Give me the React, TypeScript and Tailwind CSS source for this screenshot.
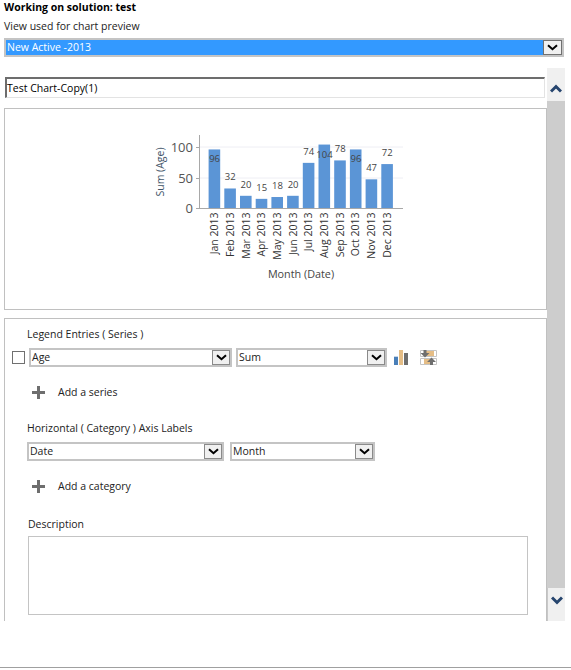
const bars = [
  { m: 'Jan 2013', v: 96 },
  { m: 'Feb 2013', v: 32 },
  { m: 'Mar 2013', v: 20 },
  { m: 'Apr 2013', v: 15 },
  { m: 'May 2013', v: 18 },
  { m: 'Jun 2013', v: 20 },
  { m: 'Jul 2013', v: 74 },
  { m: 'Aug 2013', v: 104 },
  { m: 'Sep 2013', v: 78 },
  { m: 'Oct 2013', v: 96 },
  { m: 'Nov 2013', v: 47 },
  { m: 'Dec 2013', v: 72 },
]

function Chevron({ color = '#000000' }: { color?: string }) {
  return (
    <svg width="11" height="7" viewBox="0 0 11 7">
      <path d="M1 1.2 L5.5 5.2 L10 1.2" fill="none" stroke={color} strokeWidth="2" />
    </svg>
  )
}

function ScrollChevron() {
  return (
    <svg width="12" height="9" viewBox="0 0 12 9">
      <path d="M1 1.5 L6 6.5 L11 1.5" fill="none" stroke="#26456e" strokeWidth="3" />
    </svg>
  )
}

function Select({ label, className }: { label: string; className: string }) {
  return (
    <div className={`flex h-[19px] items-center border-2 border-[#c4c4c4] bg-white ${className}`}>
      <span className="flex-1 pl-[1px] leading-[15px]">{label}</span>
      <span className="flex h-[15px] w-[18px] shrink-0 items-center justify-center border border-[#8a8a8a] bg-[#f0f0f0]">
        <Chevron />
      </span>
    </div>
  )
}

function AddRow({ label, className }: { label: string; className: string }) {
  return (
    <div className={`flex items-center ${className}`}>
      <svg width="13" height="13" viewBox="0 0 13 13" className="ml-[5px]">
        <path d="M5 0h3v5h5v3H8v5H5V8H0V5h5z" fill="#6e6e6e" />
      </svg>
      <span className="ml-[13px]">{label}</span>
    </div>
  )
}

function Chart() {
  const base = 208
  const scale = 0.61
  return (
    <svg width="541" height="200" viewBox="5 109 541 200" className="block">
      <line x1="199" y1="147" x2="403" y2="147" stroke="#eeeef4" />
      <line x1="199" y1="178" x2="403" y2="178" stroke="#eeeef4" />
      {bars.map((b, i) => {
        const x = 208.6 + i * 15.7
        const h = b.v * scale
        const inside = b.v === 96 || b.v === 104
        return (
          <g key={b.m}>
            <rect x={x} y={base - h} width="11.6" height={h} fill="#5b95d6" />
            <text
              x={x + 6}
              y={inside ? base - h + 13 : base - h - 8}
              textAnchor="middle"
              fontSize="9.5"
              fill="#444444"
            >
              {b.v}
            </text>
            <text
              transform={`translate(${x + 9.5} 212.5) rotate(-90)`}
              textAnchor="end"
              fontSize="10.5"
              fill="#333333"
            >
              {b.m}
            </text>
          </g>
        )
      })}
      <path d="M199.5 135V208.5H403M196 147.5h4M196 178.5h4M196 208.5h4" fill="none" stroke="#a8a8a8" />
      <text x="193" y="151.5" textAnchor="end" fontSize="13" fill="#555555">100</text>
      <text x="193" y="182.5" textAnchor="end" fontSize="13" fill="#555555">50</text>
      <text x="193" y="213" textAnchor="end" fontSize="13" fill="#555555">0</text>
      <text transform="translate(164 172) rotate(-90)" textAnchor="middle" fontSize="10.5" fill="#3f5468">Sum (Age)</text>
      <text x="301" y="278" textAnchor="middle" fontSize="10.8" fill="#444444">Month (Date)</text>
    </svg>
  )
}

export default function App() {
  return (
    <div className="relative flex h-[670px] w-[571px] flex-col overflow-hidden bg-white font-['Open_Sans',sans-serif] text-[10.5px] text-[#222222]">
      <div className="pl-[4px] font-bold leading-[15px] text-black -mb-[3px]">Working on solution: test</div>
      <div className="mt-[7px] pl-[4px] leading-[15px]">View used for chart preview</div>

      <div className="ml-[4px] mt-[4px] flex h-[19px] w-[560px] items-center border-2 border-[#c4c4c4]">
        <span className="flex h-full flex-1 items-center bg-[#3399ff] pl-[1px] text-white">New Active -2013</span>
        <span className="flex h-[15px] w-[19px] shrink-0 items-center justify-center border border-[#707070] bg-[#f0f0f0]">
          <Chevron />
        </span>
      </div>

      <div className="mt-[11px] flex h-[553px] items-stretch">
        <div className="w-[547px] pl-[4px]">
          <div className="ml-[1px] mt-[9px] flex h-[21px] w-[540px] items-center border border-[#e3e3e3] border-l-2 border-t-2 border-l-[#6d6d6d] border-t-[#6d6d6d] pt-[2px] text-black">
            Test Chart-Copy(1)
          </div>
          <div className="mt-[10px] h-[202px] w-[543px] border border-[#c0c0c0]">
            <Chart />
          </div>

          <div className="mt-[8px] h-[303px] w-[543px] border border-b-0 border-[#c0c0c0]">
            <div className="ml-[22px] mt-[8px] leading-[15px]">Legend Entries ( Series )</div>
            <div className="mt-[6px] flex items-center">
              <span className="ml-[7px] h-[13px] w-[13px] border border-[#707070]" />
              <Select label="Age" className="ml-[4px] w-[203px]" />
              <Select label="Sum" className="ml-[4px] w-[151px]" />
              <svg width="14" height="15" viewBox="0 0 14 15" className="ml-[7px]">
                <rect x="0" y="6" width="4" height="9" fill="#4a7fb8" />
                <rect x="0" y="6" width="4" height="1" fill="#c5d6e8" />
                <rect x="5" y="0" width="4" height="15" fill="#e5bd85" />
                <rect x="10" y="3" width="4" height="12" fill="#6e6e6e" />
              </svg>
              <svg width="17" height="15" viewBox="0 0 17 15" className="ml-[12px]">
                <path d="M.5.5h16v6H.5zM.5 8.5h16v6H.5z" fill="none" stroke="#c4c4c4" />
                <rect x="6" y="1" width="8" height="5" fill="#e5bd85" />
                <rect x="4" y="9" width="8" height="5" fill="#e5bd85" />
                <path d="M3.5 0h3v3h3L5 7.5.5 3h3z" fill="#6e6e6e" />
                <path d="M10 15h3v-3h3l-4.500-4.500L7 12h3z" fill="#6e6e6e" />
              </svg>
            </div>
            <AddRow label="Add a series" className="ml-[22px] mt-[18px]" />
            <div className="ml-[22px] mt-[20px] leading-[15px]">Horizontal ( Category ) Axis Labels</div>
            <div className="mt-[6px] flex">
              <Select label="Date" className="ml-[22px] w-[197px]" />
              <Select label="Month" className="ml-[6px] w-[145px]" />
            </div>
            <AddRow label="Add a category" className="ml-[22px] mt-[18px]" />
            <div className="ml-[23px] mt-[22px] leading-[15px]">Description</div>
            <div className="ml-[23px] mt-[4px] h-[79px] w-[500px] border border-[#c4c4c4]" />
          </div>
        </div>

        <div className="flex w-[18px] flex-col bg-[#cdcdcd]">
          <div className="flex h-[33px] items-center justify-center bg-[#f0f0f0] pt-[8px]">
            <span className="rotate-180"><ScrollChevron /></span>
          </div>
          <div className="flex-1" />
          <div className="flex h-[33px] items-center justify-center border-l border-[#c8c8c8] bg-[#f0f0f0] pb-[8px]">
            <ScrollChevron />
          </div>
        </div>
      </div>

      <div className="mb-[2px] mt-auto h-[1px] w-full bg-[#a0a0a0]" />
    </div>
  )
}
